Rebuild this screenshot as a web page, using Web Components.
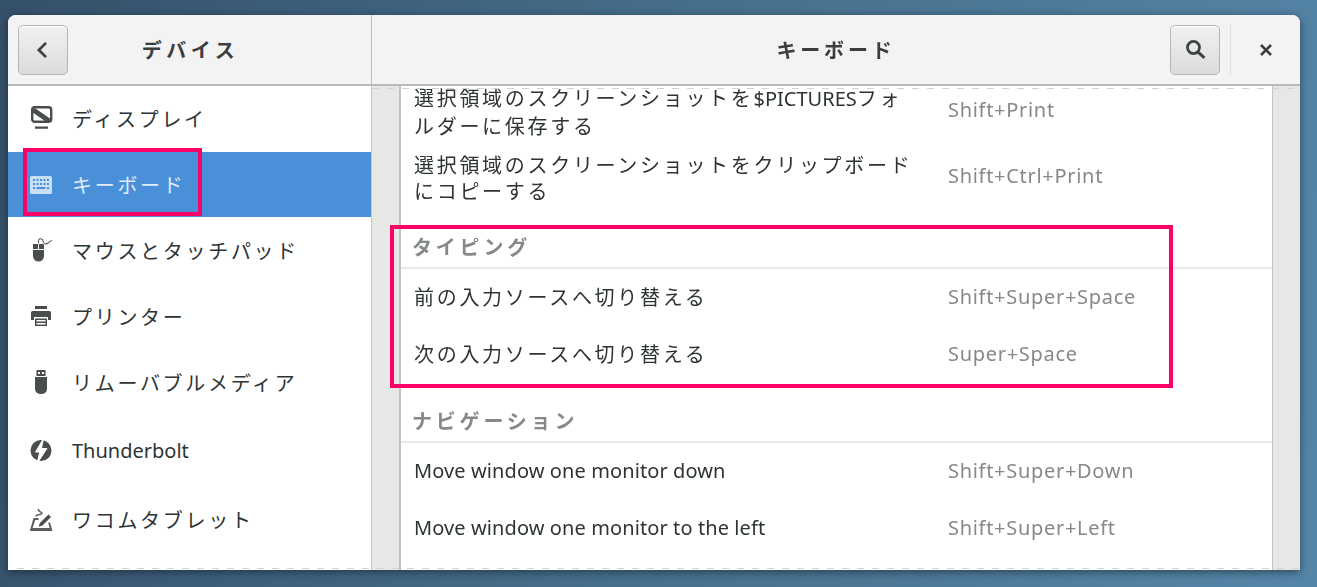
<!DOCTYPE html>
<html lang="ja">
<head>
<meta charset="UTF-8">
<title>キーボード</title>
<style>
  html, body { margin: 0; height: 100%; }
  body {
    overflow: hidden;
    background: linear-gradient(100deg, #35506a 0%, #466f8b 50%, #5586a8 100%);
    font-family: "Noto Sans", "Noto Sans CJK JP", sans-serif;
    font-size: 20px;
    color: #2e3436;
  }
  .lat { letter-spacing: 0; }
</style>
</head>
<body>
<settings-window>
  <header-bar slot="header">
    <icon-button slot="left"><svg viewBox="0 0 16 16" width="22" height="22"><path d="M10.2 2.8 5 8l5.2 5.2" fill="none" stroke="#3d4244" stroke-width="2"/></svg></icon-button>
    <span slot="left-title">デバイス</span>
    <span slot="title">キーボード</span>
    <icon-button slot="right"><svg viewBox="0 0 16 16" width="23" height="23"><circle cx="6.6" cy="6.6" r="4.2" fill="none" stroke="#3d4244" stroke-width="1.9"/><path d="m9.8 9.8 4.4 4" fill="none" stroke="#3d4244" stroke-width="2.1"/></svg></icon-button>
  </header-bar>

  <nav-item slot="nav" style="--row:66px;--pad:2px">
    <svg slot="icon" viewBox="0 0 24 24"><rect x="3.200" y="1.200" width="19" height="14.600" rx="2.500" fill="none" stroke="#4a4d4e" stroke-width="2.400"/><path fill="#4a4d4e" d="M3 2.500h3.500L21 12.500V16h-3.500L3 6zM6 20.500h13v2.300H6z"/></svg>
    ディスプレイ
  </nav-item>
  <nav-item slot="nav" selected style="--row:65px">
    <svg slot="icon" viewBox="0 0 24 20"><path fill="#c9dff6" fill-rule="evenodd" d="M2.500 1h19A1.500 1.500 0 0 1 23 2.500v15a1.500 1.500 0 0 1-1.500 1.500h-19A1.500 1.500 0 0 1 1 17.500v-15A1.500 1.500 0 0 1 2.500 1zM4 4v2h2V4zm3.500 0v2h2V4zM11 4v2h2V4zm3.500 0v2h2V4zM18 4v2h2V4zM4 8v2h2V8zm3.500 0v2h2V8zM11 8v2h2V8zm3.500 0v2h2V8zM18 8v2h2V8zM4 12v2h2v-2zm3.500 0v2h9v-2zM18 12v2h2v-2z"/></svg>
    キーボード
  </nav-item>
  <nav-item slot="nav" style="--row:66px">
    <svg slot="icon" viewBox="0 0 24 24"><path fill="#4a4d4e" d="M4 6h5v5H4zM10 6h5v5h-5zM4 12h11v6a5.500 5.500 0 0 1-11 0z"/><path fill="none" stroke="#5c5f60" stroke-width="1.100" d="M9.500 5.500V3c0-3 4-3 4.500 0 .5 3 3.500 3.500 5 2s2-2 4-2.500"/></svg>
    マウスとタッチパッド
  </nav-item>
  <nav-item slot="nav" style="--row:66px">
    <svg slot="icon" viewBox="0 0 24 24"><path fill="#4a4d4e" d="M6 2h12v3H6zM3.500 7h17A1.500 1.500 0 0 1 22 8.500V16h-3v-3H5v3H2V8.500A1.500 1.500 0 0 1 3.500 7zM6 14.500h12V22H6z"/><path fill="#fff" d="M7.500 16h9v1.500h-9zM7.500 19h9v1.500h-9z"/></svg>
    プリンター
  </nav-item>
  <nav-item slot="nav" style="--row:66px">
    <svg slot="icon" viewBox="0 0 24 24"><path fill="#4a4d4e" d="M7.500 0h9v6h-9zM6 7h12v12a5 5 0 0 1-5 5h-2a5 5 0 0 1-5-5z"/><path fill="#fff" d="M9 2h2v2H9zM13 2h2v2h-2z"/></svg>
    リムーバブルメディア
  </nav-item>
  <nav-item slot="nav" style="--row:71px">
    <svg slot="icon" viewBox="0 0 24 24"><circle cx="12" cy="11.500" r="10.500" fill="#4a4d4e"/><path fill="#fff" stroke="#fff" stroke-width="1" d="M14.500-.5 6.500 13h4.300L8 24.500 18 9.500h-5.600z"/></svg>
    <span class="lat">Thunderbolt</span>
  </nav-item>
  <nav-item slot="nav" style="--row:68px;--pad:1px">
    <svg slot="icon" viewBox="0 0 24 24"><path fill="#5a5d5e" d="M4.500 10h5v2H6.200L3.600 20h17l-1.500-5.500H21l2.500 8.500H.8z"/><path fill="#4a4d4e" d="M19.500 6.500 22 9l-8.500 8.500-3.800 1.200 1.200-3.800z"/><path fill="none" stroke="#5c5f60" stroke-width="1.600" d="M7 8.500c0-2.500 6-1.500 6-3.200S8.500 4 9.500 1"/></svg>
    ワコムタブレット
  </nav-item>

  <shortcut-list slot="content">
    <shortcut-row first keys="Shift+Print">選択領域のスクリーンショットを<span class="lat">$PICTURES</span>フォ<br>ルダーに保存する</shortcut-row>
    <shortcut-row tall keys="Shift+Ctrl+Print">選択領域のスクリーンショットをクリップボード<br>にコピーする</shortcut-row>
    <section-title>タイピング</section-title>
    <shortcut-row keys="Shift+Super+Space">前の入力ソースへ切り替える</shortcut-row>
    <shortcut-row keys="Super+Space">次の入力ソースへ切り替える</shortcut-row>
    <section-title style="height:60px">ナビゲーション</section-title>
    <shortcut-row latin keys="Shift+Super+Down">Move window one monitor down</shortcut-row>
    <shortcut-row latin keys="Shift+Super+Left">Move window one monitor to the left</shortcut-row>
  </shortcut-list>

  <mark-box slot="marks" style="left:15px;top:133px;width:179px;height:68px"></mark-box>
  <mark-box slot="marks" style="left:382px;top:210px;width:783px;height:163px"></mark-box>
</settings-window>

<script>
  class SettingsWindow extends HTMLElement {
    constructor() {
      super();
      const shadow = this.attachShadow({ mode: 'open' });
      shadow.innerHTML = `
        <style>
          :host {
            display: flex;
            flex-direction: column;
            position: relative;
            box-sizing: border-box;
            width: 1292px;
            height: 555px;
            margin: 15px 0 0 8px;
            background: #fff;
            border-radius: 8px 8px 1px 1px;
            box-shadow: 0 2px 9px rgba(10,20,30,.55);
            filter: blur(.55px);
          }
          .body {
            flex: 1;
            min-height: 0;
            display: grid;
            grid-template-columns: 364px 29px 871px 1fr;
            position: relative;
          }
          .nav { overflow: hidden; background: #fff; border-right: 1px solid #c4c4c0; }
          .strip { background: #e7e7e5; }
          .strip.l { border-left: 1px solid #e7e7e5; border-right: 2px solid #c2c2be; }
          .strip.r { border-left: 1px solid #c4c4c0; }
          .nav, .strip { box-sizing: content-box; }
          .content { overflow: hidden; }
          .dash {
            position: absolute;
            height: 1px;
            background: repeating-linear-gradient(90deg, #d2d2cf 0 7px, transparent 7px 15px);
          }
          .dash.t { top: 2px; left: 364px; right: 0; }
          .dash.b { bottom: 1px; left: 9px; right: 0; }
        </style>
        <slot name="header"></slot>
        <div class="body">
          <div class="nav"><slot name="nav"></slot></div>
          <div class="strip l"></div>
          <div class="content"><slot name="content"></slot></div>
          <div class="strip r"></div>
          <div class="dash t"></div>
          <div class="dash b"></div>
        </div>
        <slot name="marks"></slot>`;
    }
  }

  class HeaderBar extends HTMLElement {
    constructor() {
      super();
      const shadow = this.attachShadow({ mode: 'open' });
      shadow.innerHTML = `
        <style>
          :host {
            display: grid;
            grid-template-columns: 364px 1fr;
            height: 71px;
            flex: none;
            background: #f3f3f3;
            border-bottom: 2px solid #b9b9b5;
            border-radius: 8px 8px 0 0;
            box-sizing: border-box;
            font-weight: 700;
            color: #3a3e40;
            letter-spacing: 3.8px;
          }
          .side, .main { display: flex; align-items: center; position: relative; height: 69px; }
          .side { border-right: 1px solid #bdbdb9; padding-left: 10px; }
          .side .t { flex: 1; text-align: center; padding-right: 58px; letter-spacing: 4.5px; }
          .main .t { flex: 1; text-align: center; padding-left: 130px; }
          .end { display: flex; align-items: center; height: 50px; }
          .sep { width: 1px; height: 50px; background: #e0e0de; margin: 0 69px 0 10px; position: relative; }
          .close { position: absolute; right: 27px; top: 28px; width: 14px; height: 14px; }
        </style>
        <div class="side">
          <slot name="left"></slot>
          <span class="t"><slot name="left-title"></slot></span>
        </div>
        <div class="main">
          <span class="t"><slot name="title"></slot></span>
          <div class="end"><slot name="right"></slot><div class="sep"></div></div>
          <svg class="close" viewBox="0 0 14 14"><path d="m2 2 10 10M12 2 2 12" stroke="#3a3e40" stroke-width="2.600" fill="none"/></svg>
        </div>`;
    }
  }

  class IconButton extends HTMLElement {
    constructor() {
      super();
      const shadow = this.attachShadow({ mode: 'open' });
      shadow.innerHTML = `
        <style>
          :host {
            display: flex;
            align-items: center;
            justify-content: center;
            flex: none;
            box-sizing: border-box;
            width: 50px;
            height: 50px;
            border: 1px solid #b5b5b1;
            border-radius: 5px;
            background: linear-gradient(#f1f1f0, #dcdcda);
            box-shadow: 0 1px 0 #fff inset;
          }
        </style>
        <slot></slot>`;
    }
  }

  class NavItem extends HTMLElement {
    constructor() {
      super();
      const shadow = this.attachShadow({ mode: 'open' });
      shadow.innerHTML = `
        <style>
          :host {
            display: flex;
            align-items: center;
            box-sizing: border-box;
            height: var(--row, 66px);
            padding: 0 0 var(--pad, 0) 21px;
            letter-spacing: 2.700px;
            color: #2e3436;
          }
          :host([selected]) { background: #4a90d9; color: #dfecfa; }
          .icon { width: 24px; height: 24px; margin-right: 19px; flex: none; display: flex; }
          ::slotted(svg) { width: 24px; height: 24px; }
        </style>
        <span class="icon"><slot name="icon"></slot></span>
        <span><slot></slot></span>`;
    }
  }

  class ShortcutList extends HTMLElement {
    constructor() {
      super();
      const shadow = this.attachShadow({ mode: 'open' });
      shadow.innerHTML = `
        <style>:host { display: block; margin-top: -8px; }</style>
        <slot></slot>`;
    }
  }

  class SectionTitle extends HTMLElement {
    constructor() {
      super();
      const shadow = this.attachShadow({ mode: 'open' });
      shadow.innerHTML = `
        <style>
          :host {
            display: flex;
            align-items: center;
            box-sizing: border-box;
            height: 59px;
            padding: 16px 0 0 11px;
            border-bottom: 2px solid #e9e9e7;
            font-weight: 700;
            letter-spacing: 3.800px;
            color: #85898a;
          }
        </style>
        <slot></slot>`;
    }
  }

  class ShortcutRow extends HTMLElement {
    constructor() {
      super();
      const shadow = this.attachShadow({ mode: 'open' });
      shadow.innerHTML = `
        <style>
          :host {
            display: grid;
            grid-template-columns: 534px 1fr;
            align-items: center;
            height: 57px;
            padding-left: 12px;
            line-height: 26px;
            color: #2e3436;
            letter-spacing: 2.700px;
          }
          :host([first]), :host([tall]) { height: 66px; }
          :host([first]) .text { padding-top: 4px; line-height: 28px; }
          :host([tall]) .text { padding-top: 4px; }
          :host([latin]) { letter-spacing: .1px; }
          :host([latin]) .text { padding-bottom: 2px; }
          .text { padding-left: 1px; }
          .keys { color: #85898a; letter-spacing: .7px; margin: 0 0 2px 1px; }
        </style>
        <div class="text"><slot></slot></div>
        <div class="keys"></div>`;
      shadow.querySelector('.keys').textContent = this.getAttribute('keys');
    }
  }

  class MarkBox extends HTMLElement {
    constructor() {
      super();
      const shadow = this.attachShadow({ mode: 'open' });
      shadow.innerHTML = `
        <style>
          :host {
            display: block;
            position: absolute;
            box-sizing: border-box;
            border: 4px solid #fb0066;
            pointer-events: none;
          }
        </style>`;
    }
  }

  customElements.define('settings-window', SettingsWindow);
  customElements.define('header-bar', HeaderBar);
  customElements.define('icon-button', IconButton);
  customElements.define('nav-item', NavItem);
  customElements.define('shortcut-list', ShortcutList);
  customElements.define('section-title', SectionTitle);
  customElements.define('shortcut-row', ShortcutRow);
  customElements.define('mark-box', MarkBox);
</script>
</body>
</html>
